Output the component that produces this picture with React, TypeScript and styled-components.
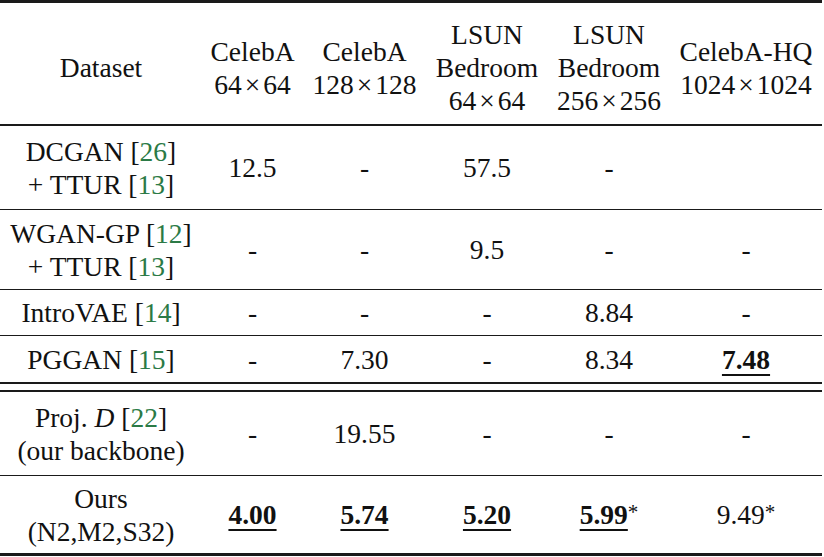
import React from "react";
import styled, { createGlobalStyle } from "styled-components";

const Global = createGlobalStyle`
  html, body { margin: 0; padding: 0; background: #fff; }
  body { font-family: "Liberation Serif", serif; color: #111; }
`;

const COLS = "202px 101px 123px 122px 122px 152px";

const Table = styled.div`
  width: 822px;
  display: flex;
  flex-direction: column;
  font-family: "Liberation Serif", serif;
  font-size: 27.5px;
  line-height: 33px;
`;

const Rule = styled.div<{ $w: number; $gap?: number }>`
  height: ${(p) => p.$w}px;
  background: #1a1a1a;
  margin-bottom: ${(p) => p.$gap ?? 0}px;
`;

const Row = styled.div<{ $h: number; $shift?: number }>`
  display: grid;
  grid-template-columns: ${COLS};
  height: ${(p) => p.$h}px;
  box-sizing: border-box;
  padding-top: ${(p) => p.$shift ?? 0}px;
  align-items: center;
`;

const Cell = styled.div`
  text-align: center;
  white-space: nowrap;
`;

const Ref = styled.span`
  color: #2b7a46;
`;

const Best = styled.span`
  font-weight: bold;
  text-decoration: underline;
  text-decoration-thickness: 1.5px;
  text-underline-offset: 5px;
`;

const Ital = styled.span`
  font-style: italic;
`;

const Star = styled.span`
  font-size: 21px;
  vertical-align: 5px;
  line-height: 0;
`;

const Times = styled.span`
  margin: 0 3px;
`;

const X = () => <Times>×</Times>;

const cite = (name: React.ReactNode, n: number) => (
  <>
    {name} [<Ref>{n}</Ref>]
  </>
);

type R = { h: number; cells: React.ReactNode[] };

const top: R[] = [
  {
    h: 83,
    cells: [
      <>
        {cite("DCGAN", 26)}
        <br />
        {cite("+ TTUR", 13)}
      </>,
      "12.5",
      "-",
      "57.5",
      "-",
      "",
    ],
  },
  {
    h: 79,
    cells: [
      <>
        {cite("WGAN-GP", 12)}
        <br />
        {cite("+ TTUR", 13)}
      </>,
      "-",
      "-",
      "9.5",
      "-",
      "-",
    ],
  },
  { h: 45, cells: [cite("IntroVAE", 14), "-", "-", "-", "8.84", "-"] },
  {
    h: 46,
    cells: [cite("PGGAN", 15), "-", "7.30", "-", "8.34", <Best>7.48</Best>],
  },
];

const bottom: R[] = [
  {
    h: 83,
    cells: [
      <>
        Proj. <Ital>D</Ital> [<Ref>22</Ref>]
        <br />
        (our backbone)
      </>,
      "-",
      "19.55",
      "-",
      "-",
      "-",
    ],
  },
  {
    h: 77,
    cells: [
      <>
        Ours
        <br />
        (N2,M2,S32)
      </>,
      <Best>4.00</Best>,
      <Best>5.74</Best>,
      <Best>5.20</Best>,
      <>
        <Best>5.99</Best>
        <Star>*</Star>
      </>,
      <>
        9.49<Star>*</Star>
      </>,
    ],
  },
];

const header: React.ReactNode[] = [
  "Dataset",
  <>
    CelebA
    <br />
    64<X />64
  </>,
  <>
    CelebA
    <br />
    128<X />128
  </>,
  <>
    LSUN
    <br />
    Bedroom
    <br />
    64<X />64
  </>,
  <>
    LSUN
    <br />
    Bedroom
    <br />
    256<X />256
  </>,
  <>
    CelebA-HQ
    <br />
    1024<X />1024
  </>,
];

const Rows = ({ rows }: { rows: R[] }) => (
  <>
    {rows.map((r, i) => (
      <React.Fragment key={i}>
        {i > 0 && <Rule $w={1} />}
        <Row $h={r.h}>
          {r.cells.map((c, j) => (
            <Cell key={j}>{c}</Cell>
          ))}
        </Row>
      </React.Fragment>
    ))}
  </>
);

export default function App() {
  return (
    <>
      <Global />
      <Table>
        <Rule $w={3} />
        <Row $h={121} $shift={8}>
          {header.map((c, j) => (
            <Cell key={j}>{c}</Cell>
          ))}
        </Row>
        <Rule $w={2} />
        <Rows rows={top} />
        <Rule $w={2} $gap={6} />
        <Rule $w={2} />
        <Rows rows={bottom} />
        <Rule $w={3} />
      </Table>
    </>
  );
}
